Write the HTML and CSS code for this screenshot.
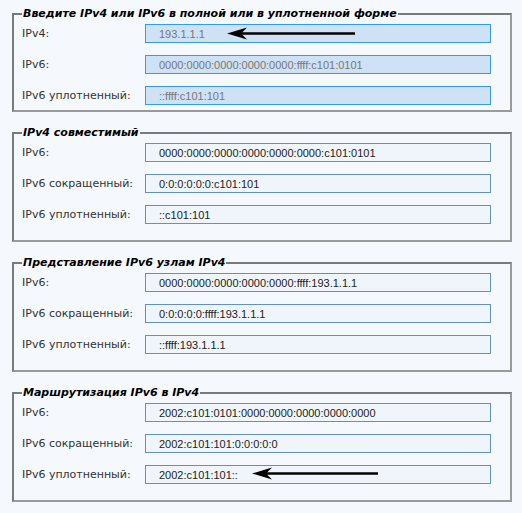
FILE: index.html
```html
<!DOCTYPE html>
<html>

<head>
<title>IPv4 в IPv6</title>
<meta charset="UTF-8">

<link rel="stylesheet" href="styles.css">
</head>

<body>

	<div id="converter">
		<fieldset class="group source">
			<legend>Введите IPv4 или IPv6 в полной или в уплотненной форме</legend>
			<div class="row">
				<label for="src-v4">IPv4:</label>
				<div class="field">
					<input id="src-v4" type="text" value="193.1.1.1" readonly>
					<svg class="arrow arrow-top" width="128" height="13" viewBox="0 0 128 13"><path d="M0 6.5 L20 0.5 L14 6.5 L20 12.5 Z" fill="#000"/><line x1="13" y1="6.5" x2="128" y2="6.5" stroke="#000" stroke-width="2.5"/></svg>
				</div>
			</div>
			<div class="row">
				<label for="src-v6">IPv6:</label>
				<div class="field"><input id="src-v6" type="text" value="0000:0000:0000:0000:0000:ffff:c101:0101" readonly></div>
			</div>
			<div class="row">
				<label for="src-v6c">IPv6 уплотненный:</label>
				<div class="field"><input id="src-v6c" type="text" value="::ffff:c101:101" readonly></div>
			</div>
		</fieldset>

		<fieldset class="group">
			<legend>IPv4 совместимый</legend>
			<div class="row">
				<label>IPv6:</label>
				<div class="field"><input type="text" value="0000:0000:0000:0000:0000:0000:c101:0101" readonly></div>
			</div>
			<div class="row">
				<label>IPv6 сокращенный:</label>
				<div class="field"><input type="text" value="0:0:0:0:0:0:c101:101" readonly></div>
			</div>
			<div class="row">
				<label>IPv6 уплотненный:</label>
				<div class="field"><input type="text" value="::c101:101" readonly></div>
			</div>
		</fieldset>

		<fieldset class="group">
			<legend>Представление IPv6 узлам IPv4</legend>
			<div class="row">
				<label>IPv6:</label>
				<div class="field"><input type="text" value="0000:0000:0000:0000:0000:ffff:193.1.1.1" readonly></div>
			</div>
			<div class="row">
				<label>IPv6 сокращенный:</label>
				<div class="field"><input type="text" value="0:0:0:0:0:ffff:193.1.1.1" readonly></div>
			</div>
			<div class="row">
				<label>IPv6 уплотненный:</label>
				<div class="field"><input type="text" value="::ffff:193.1.1.1" readonly></div>
			</div>
		</fieldset>

		<fieldset class="group">
			<legend>Маршрутизация IPv6 в IPv4</legend>
			<div class="row">
				<label>IPv6:</label>
				<div class="field"><input type="text" value="2002:c101:0101:0000:0000:0000:0000:0000" readonly></div>
			</div>
			<div class="row">
				<label>IPv6 сокращенный:</label>
				<div class="field"><input type="text" value="2002:c101:101:0:0:0:0:0" readonly></div>
			</div>
			<div class="row">
				<label>IPv6 уплотненный:</label>
				<div class="field">
					<input type="text" value="2002:c101:101::" readonly>
					<svg class="arrow arrow-bottom" width="126" height="13" viewBox="0 0 126 13"><path d="M0 6.5 L20 0.5 L14 6.5 L20 12.5 Z" fill="#000"/><line x1="13" y1="6.5" x2="126" y2="6.5" stroke="#000" stroke-width="2.5"/></svg>
				</div>
			</div>
		</fieldset>
	</div>

</body>
</html>
```

FILE: styles.css
```css
html, body {
	margin: 0;
	padding: 0;
	background: #f5f8fc;
}

#converter {
	padding: 6px 10px 0 12px;
	font: 11px "DejaVu Sans", Verdana, sans-serif;
	color: #333;
}

.group {
	margin: 0 0 13px 0;
	padding: 2px 17px 16px 8px;
	border: 2px solid #8a8a8a;
	border-color: #7a7a7a #9a9a9a #9a9a9a #7a7a7a;
}

.group.source {
	padding-bottom: 5px;
}

.group legend {
	padding: 0 1px;
	font: italic bold 11px/16px "DejaVu Sans", Verdana, sans-serif;
	color: #000;
}

.row {
	display: flex;
	align-items: center;
	height: 19px;
	margin-bottom: 12px;
}

.row:last-child {
	margin-bottom: 0;
}

.row label {
	width: 123px;
	flex: none;
}

.field {
	position: relative;
	width: 346px;
	height: 19px;
}

.field input {
	box-sizing: border-box;
	width: 100%;
	height: 19px;
	margin: 0;
	padding: 0 0 0 13px;
	border: 1px solid #6190d0;
	background: #eff5fa;
	color: #222;
	font: 11px "Liberation Sans", Arial, sans-serif;
	outline: none;
}

.source .field input {
	border-color: #3399ff;
	background: #cfe1f4;
	color: #777;
}

.arrow {
	position: absolute;
	top: 3px;
}

.arrow-top {
	left: 82px;
}

.arrow-bottom {
	left: 107px;
	top: 2px;
}
```
